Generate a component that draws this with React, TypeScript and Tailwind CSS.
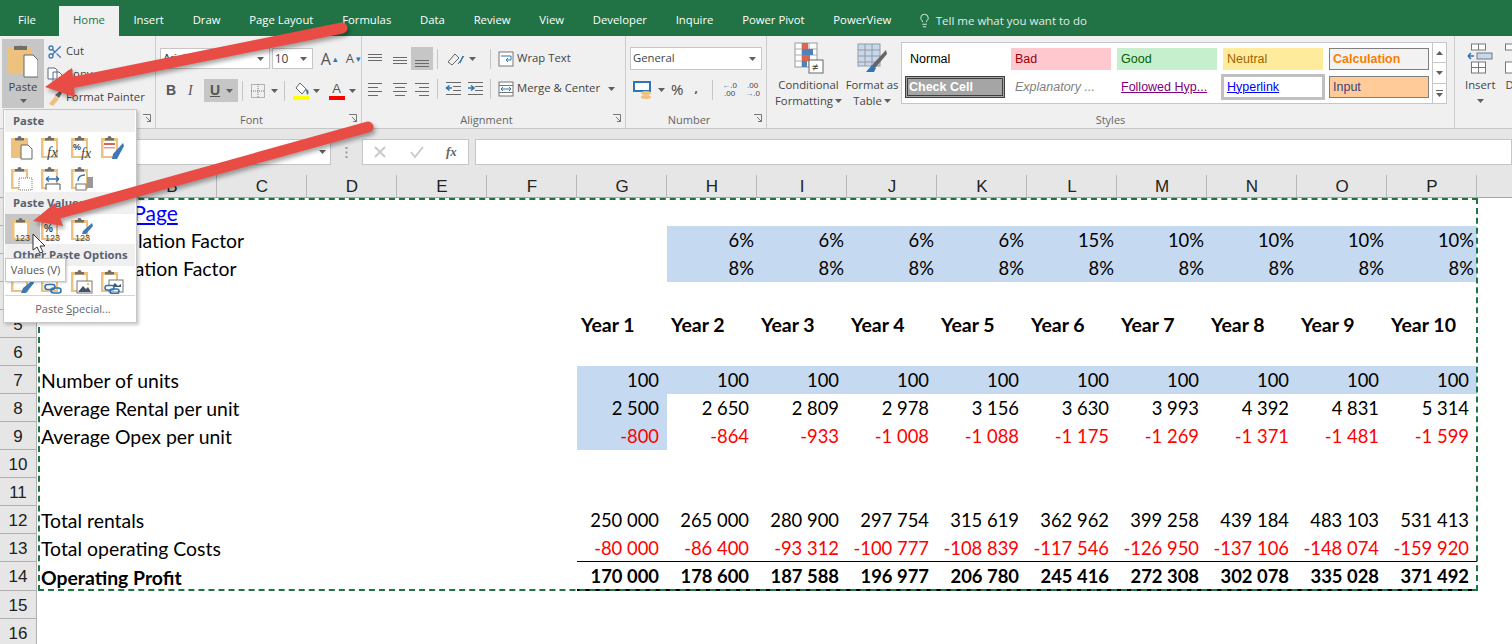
import { Lightbulb, Scissors } from "lucide-react";
import type { ReactNode } from "react";

const columns = ["A", "B", "C", "D", "E", "F", "G", "H", "I", "J", "K", "L", "M", "N", "O", "P"];
const tabs = ["Insert", "Draw", "Page Layout", "Formulas", "Data", "Review", "View", "Developer", "Inquire", "Power Pivot", "PowerView"];

type SheetRow = {
  n: number;
  label?: string;
  kind?: "link" | "bold";
  values?: string[];
  tone?: "red" | "bold" | "pct" | "year";
  blue?: number[];
  rule?: boolean;
  tall?: boolean;
};

const rows: SheetRow[] = [
  { n: 1, label: "Return to Page", kind: "link" },
  { n: 2, label: "Rental Escalation Factor", values: ["", "6%", "6%", "6%", "6%", "15%", "10%", "10%", "10%", "10%"], tone: "pct", blue: [1, 2, 3, 4, 5, 6, 7, 8, 9] },
  { n: 3, label: "Opex Escalation Factor", values: ["", "8%", "8%", "8%", "8%", "8%", "8%", "8%", "8%", "8%"], tone: "pct", blue: [1, 2, 3, 4, 5, 6, 7, 8, 9] },
  { n: 4 },
  { n: 5, values: ["Year 1", "Year 2", "Year 3", "Year 4", "Year 5", "Year 6", "Year 7", "Year 8", "Year 9", "Year 10"], tone: "year" },
  { n: 6 },
  { n: 7, label: "Number of units", values: Array(10).fill("100"), blue: [0, 1, 2, 3, 4, 5, 6, 7, 8, 9] },
  { n: 8, label: "Average Rental per unit", values: ["2 500", "2 650", "2 809", "2 978", "3 156", "3 630", "3 993", "4 392", "4 831", "5 314"], blue: [0] },
  { n: 9, label: "Average Opex per unit", values: ["-800", "-864", "-933", "-1 008", "-1 088", "-1 175", "-1 269", "-1 371", "-1 481", "-1 599"], tone: "red", blue: [0] },
  { n: 10 },
  { n: 11 },
  { n: 12, label: "Total rentals", values: ["250 000", "265 000", "280 900", "297 754", "315 619", "362 962", "399 258", "439 184", "483 103", "531 413"] },
  { n: 13, label: "Total operating Costs", values: ["-80 000", "-86 400", "-93 312", "-100 777", "-108 839", "-117 546", "-126 950", "-137 106", "-148 074", "-159 920"], tone: "red", rule: true },
  { n: 14, label: "Operating Profit", kind: "bold", values: ["170 000", "178 600", "187 588", "196 977", "206 780", "245 416", "272 308", "302 078", "335 028", "371 492"], tone: "bold", tall: true },
  { n: 15 },
  { n: 16 },
];

function Caret({ className = "" }: { className?: string }) {
  return (
    <svg width="7" height="4" viewBox="0 0 7 4" className={className}>
      <path d="M0 0h7L3.5 4z" fill="#5f5f5f" />
    </svg>
  );
}

function Lines({ widths, align = "left" }: { widths: number[]; align?: "left" | "center" | "right" }) {
  return (
    <svg width="16" height="16" viewBox="0 0 16 16">
      {widths.map((w, i) => {
        const x = align === "left" ? 1 : align === "center" ? 8 - w / 2 : 15 - w;
        return <rect key={i} x={x} y={2 + i * 4} width={w} height="1" fill="#6a6a6a" />;
      })}
    </svg>
  );
}

function VAlign({ top }: { top: number }) {
  return (
    <svg width="16" height="16" viewBox="0 0 16 16">
      {[0, 1, 2].map((i) => (
        <rect key={i} x="1" y={top + i * 3} width="14" height="1" fill="#6a6a6a" />
      ))}
    </svg>
  );
}

function Indent({ flip }: { flip?: boolean }) {
  return (
    <svg width="17" height="16" viewBox="0 0 17 16">
      {[1, 5, 9, 13].map((y) => (
        <rect key={y} x={y === 1 || y === 13 ? 1 : 8} y={y} width={y === 1 || y === 13 ? 15 : 8} height="1" fill="#6a6a6a" />
      ))}
      <path d={flip ? "M1 7h5M4 4.5 7 7l-3 2.5" : "M7 7H2M4.5 4.5 1.5 7l3 2.5"} stroke="#2e75b6" strokeWidth="1.6" fill="none" />
    </svg>
  );
}

function Clip({ children, hollow = true }: { children?: ReactNode; hollow?: boolean }) {
  return (
    <svg width="24" height="25" viewBox="0 0 24 25">
      <rect x="1" y="3" width="17" height="20" fill="#edc27f" />
      {hollow && <rect x="3.5" y="6" width="12.5" height="15" fill="#ffffff" />}
      <path d="M5 5V3h2.5a2 2 0 0 1 4 0H14v2.5H5z" fill="#6e6e6e" />
      {children}
    </svg>
  );
}

const iconText = "font-['Liberation_Serif',serif] italic";

function PasteGlyph({ kind }: { kind: string }) {
  switch (kind) {
    case "paste":
      return (
        <Clip hollow={false}>
          <path d="M11 10h7l4 4v10H11z" fill="#fff" stroke="#666" />
        </Clip>
      );
    case "fx":
      return (
        <Clip>
          <text x="7" y="22" fontSize="15" fill="#444" className={iconText}>fx</text>
        </Clip>
      );
    case "pctfx":
      return (
        <Clip>
          <text x="3" y="15" fontSize="9" fontWeight="700" fill="#444" className="font-['Liberation_Sans',sans-serif]">%</text>
          <text x="11" y="23" fontSize="14" fill="#444" className={iconText}>fx</text>
        </Clip>
      );
    case "format":
      return (
        <Clip>
          <rect x="4" y="8" width="11" height="2" fill="#d9645a" />
          <rect x="4" y="12" width="11" height="1.5" fill="#e79b92" />
          <path d="M23 8 13 19l-1 5h5L24 11z" fill="#3f78b4" />
        </Clip>
      );
    case "noborder":
      return (
        <Clip>
          <rect x="9" y="12" width="13" height="12" fill="#fff" stroke="#777" strokeDasharray="1 1" />
        </Clip>
      );
    case "width":
      return (
        <Clip>
          <path d="M6 13h13M6 13l3-2.500M6 13l3 2.500M19 13l-3-2.500M19 13l-3 2.500" stroke="#2e75b6" strokeWidth="1.3" fill="none" />
          <path d="M6 24v-6h14v6" stroke="#555" fill="#fff" />
        </Clip>
      );
    case "transpose":
      return (
        <Clip>
          <rect x="17" y="11" width="6" height="11" fill="#999" />
          <rect x="6" y="18" width="10" height="6" fill="#fff" stroke="#777" />
          <path d="M8 15c0-4 3-6 7-6" stroke="#2e75b6" strokeWidth="1.4" fill="none" />
        </Clip>
      );
    case "values":
      return (
        <Clip hollow>
          <text x="4" y="24" fontSize="9" fill="#444" className="font-['Liberation_Sans',sans-serif]">123</text>
        </Clip>
      );
    case "pct123":
      return (
        <Clip>
          <text x="4" y="15" fontSize="10" fontWeight="700" fill="#444" className="font-['Liberation_Sans',sans-serif]">%</text>
          <text x="5" y="24" fontSize="9" fill="#444" className="font-['Liberation_Sans',sans-serif]">123</text>
        </Clip>
      );
    case "fmt123":
      return (
        <Clip>
          <path d="M22 6 13 14l-1 3h4l7-8z" fill="#3f78b4" />
          <text x="5" y="24" fontSize="9" fill="#444" className="font-['Liberation_Sans',sans-serif]">123</text>
        </Clip>
      );
    case "fmtonly":
      return (
        <Clip>
          <path d="M23 11 13 19l-2 5h5l8-10z" fill="#3f78b4" />
        </Clip>
      );
    case "link":
      return (
        <Clip>
          <rect x="5" y="15.500" width="10" height="5" rx="2.500" stroke="#2e75b6" strokeWidth="1.6" fill="none" />
          <rect x="11" y="19" width="10" height="5" rx="2.500" stroke="#2e75b6" strokeWidth="1.6" fill="none" />
        </Clip>
      );
    case "picture":
      return (
        <Clip>
          <rect x="7" y="12" width="15" height="12" fill="#fff" stroke="#777" />
          <circle cx="18" cy="15" r="1.300" fill="#edc27f" />
          <path d="M8 23l5-6 3 3 2-2 3 5z" fill="#44546a" />
        </Clip>
      );
    default:
      return (
        <Clip>
          <rect x="9" y="11" width="14" height="12" fill="#fff" stroke="#777" />
          <path d="M11 18l4-4 3 3 3-2v3z" fill="#44546a" />
          <rect x="5" y="16.500" width="9" height="4.500" rx="2.200" stroke="#2e75b6" strokeWidth="1.600" fill="#fff" />
          <rect x="10" y="20" width="9" height="4.500" rx="2.200" stroke="#2e75b6" strokeWidth="1.600" fill="none" />
        </Clip>
      );
  }
}

function MenuHeader({ children }: { children: ReactNode }) {
  return (
    <div className="mx-[1px] flex h-[22px] items-center whitespace-nowrap bg-[#f0f0f0] pl-[8px] text-[11.300px] font-bold text-[#5a6170]">
      {children}
    </div>
  );
}

function PasteMenu() {
  return (
    <div className="absolute left-[3px] top-[109px] z-20 flex h-[214px] w-[134px] flex-col border border-[#c6c6c6] bg-white shadow-[2px_2px_3px_rgba(0,0,0,0.2)]">
      <MenuHeader>Paste</MenuHeader>
      <div className="flex gap-[6px] pl-[6px] pt-[3px]">
        {["paste", "fx", "pctfx", "format"].map((k) => (
          <PasteGlyph key={k} kind={k} />
        ))}
      </div>
      <div className="flex gap-[6px] pl-[6px] pt-[6px]">
        {["noborder", "width", "transpose"].map((k) => (
          <PasteGlyph key={k} kind={k} />
        ))}
      </div>
      <div className="mt-[1px]">
        <MenuHeader>Paste Values</MenuHeader>
      </div>
      <div className="flex h-[30px] items-center pl-[1px]">
        <div className="flex h-[30px] w-[35px] items-center justify-center bg-[#c6c6c6]">
          <PasteGlyph kind="values" />
        </div>
        <div className="flex gap-[6px]">
          <PasteGlyph kind="pct123" />
          <PasteGlyph kind="fmt123" />
        </div>
      </div>
      <MenuHeader>Other Paste Options</MenuHeader>
      <div className="flex gap-[6px] pl-[6px] pt-[3px]">
        {["fmtonly", "link", "picture", "linkpicture"].map((k) => (
          <PasteGlyph key={k} kind={k} />
        ))}
      </div>
      <div className="mx-[1px] mt-[1px] border-t border-[#d4d4d4]" />
      <div className="flex flex-1 items-center justify-center pl-[6px] text-[11px] text-[#666]">
        Paste&nbsp;<span className="underline">S</span>pecial...
      </div>
    </div>
  );
}

function Group({ width, label, launcher = true, children }: { width: number; label: string; launcher?: boolean; children: ReactNode }) {
  return (
    <div className="relative flex h-full shrink-0 flex-col border-r border-[#cdcdcd]" style={{ width }}>
      <div className="h-[77px]">{children}</div>
      <div className={`flex flex-1 items-start justify-center text-[11px] leading-[13px] text-[#666] ${launcher ? "pr-[14px]" : ""}`}>{label}</div>
      {launcher && (
        <svg width="8" height="8" viewBox="0 0 8 8" className="absolute bottom-[6px] right-[4px]">
          <path d="M0 .5h7.500V8M3 3l4 4M4 7.500h3.500V4" stroke="#777" fill="none" />
        </svg>
      )}
    </div>
  );
}

function Ribbon() {
  return (
    <div className="flex h-[93px] border-b border-[#c6c6c6] bg-[#f0f0f0] text-[11.300px] text-[#444]">
      <Group width={156} label="">
        <div className="flex h-full pl-[2px] pt-[3px]">
          <div className="flex h-[69px] w-[42px] flex-col items-center bg-[#c6c6c6] pt-[5px]">
            <svg width="30" height="34" viewBox="0 0 30 34">
              <rect x="0" y="3" width="24" height="27" fill="#edc27f" />
              <path d="M6 5V2h5a3 3 0 0 1 3 0h5v4H6z" fill="#6e6e6e" />
              <path d="M16 11h9l5 5v17H16z" fill="#fff" stroke="#666" />
            </svg>
            <span className="mt-[2px] leading-[14px]">Paste</span>
            <Caret className="mt-[5px]" />
          </div>
          <div className="flex flex-col gap-[6px] pl-[3px] pt-[4px]">
            <div className="flex h-[17px] items-center gap-[3px]">
              <Scissors size={16} className="text-[#3f78b4]" />
              Cut
            </div>
            <div className="flex h-[17px] items-center gap-[3px]">
              <svg width="16" height="16" viewBox="0 0 16 16">
                <path d="M1 1h7l2 2v9H1zM6 5h6l3 3v7H6z" fill="#fff" stroke="#5a6a80" />
              </svg>
              Copy
            </div>
            <div className="flex h-[17px] items-center gap-[3px] whitespace-nowrap">
              <svg width="16" height="16" viewBox="0 0 16 16">
                <path d="M2 14l6-8 4 3-6 7z" fill="#edc27f" />
                <path d="M8 5l5-4 2 2-3 5z" fill="#666" />
              </svg>
              Format Painter
            </div>
          </div>
        </div>
      </Group>

      <Group width={206} label="Font">
        <div className="flex flex-col gap-[10px] pl-[4px] pt-[12px]">
          <div className="flex h-[21px] items-center gap-[2px]">
            <div className="flex h-[21px] w-[110px] items-center justify-between border border-[#c6c6c6] bg-white pl-[2px] pr-[5px]">
              <span className="font-['Liberation_Sans',sans-serif]">Arial</span>
              <Caret />
            </div>
            <div className="flex h-[21px] w-[41px] items-center justify-between border border-[#c6c6c6] bg-white pl-[2px] pr-[5px] text-[12px]">
              10
              <Caret />
            </div>
            <span className="ml-[6px] text-[16px] leading-none text-[#555]">A</span>
            <span className="text-[9px] leading-none text-[#2e75b6]">▴</span>
            <span className="ml-[6px] text-[13px] leading-none text-[#555]">A</span>
            <span className="text-[9px] leading-none text-[#2e75b6]">▾</span>
          </div>
          <div className="flex h-[23px] items-center pl-[4px] font-['Liberation_Sans',sans-serif] text-[14px] text-[#555]">
            <span className="w-[24px] pl-[2px] font-bold">B</span>
            <span className="w-[16px] font-['Liberation_Serif',serif] italic">I</span>
            <div className="flex h-[23px] w-[34px] items-center gap-[6px] bg-[#c6c6c6] pl-[6px] font-bold">
              <span className="underline">U</span>
              <Caret />
            </div>
            <div className="ml-[4px] h-[20px] w-px bg-[#c6c6c6]" />
            <svg width="16" height="16" viewBox="0 0 16 16" className="ml-[7px]">
              <rect x="1.500" y="1.500" width="13" height="13" fill="none" stroke="#777" strokeDasharray="1 1" />
              <path d="M8 1v14M1 8h14" stroke="#777" strokeDasharray="1 1" />
            </svg>
            <Caret className="ml-[5px]" />
            <div className="ml-[6px] h-[20px] w-px bg-[#c6c6c6]" />
            <div className="ml-[7px] flex w-[18px] flex-col items-center">
              <svg width="16" height="13" viewBox="0 0 16 13">
                <path d="M7 1l6 6-4 5-6-6z" fill="#fff" stroke="#666" />
                <path d="M13 8c2 1 2 3 1 4" stroke="#2e75b6" strokeWidth="2" fill="none" />
              </svg>
              <div className="mt-[1px] h-[4px] w-[16px] bg-[#ffff00]" />
            </div>
            <Caret className="ml-[3px]" />
            <div className="ml-[8px] flex w-[17px] flex-col items-center text-[13px] leading-[13px]">
              A
              <div className="mt-[1px] h-[4px] w-[16px] bg-[#ff0000]" />
            </div>
            <Caret className="ml-[4px]" />
          </div>
        </div>
      </Group>

      <Group width={264} label="Alignment">
        <div className="flex flex-col gap-[7px] pl-[5px] pt-[11px]">
          <div className="flex h-[23px] items-center">
            <div className="flex w-[22px]"><VAlign top={3} /></div>
            <div className="flex w-[22px] justify-center"><VAlign top={6} /></div>
            <div className="flex h-[23px] w-[22px] items-center justify-center bg-[#c6c6c6]"><VAlign top={9} /></div>
            <div className="ml-[4px] h-[20px] w-px bg-[#c6c6c6]" />
            <svg width="20" height="18" viewBox="0 0 20 18" className="ml-[8px]">
              <path d="M2 12l7-8 4 4-7 7zM12 14l6-8" stroke="#666" fill="none" />
              <path d="M14 13l3-7" stroke="#2e75b6" strokeWidth="1.300" />
            </svg>
            <Caret className="ml-[3px]" />
            <div className="ml-[14px] h-[20px] w-px bg-[#c6c6c6]" />
            <svg width="16" height="16" viewBox="0 0 16 16" className="ml-[7px]">
              <rect x="1" y="1" width="14" height="14" fill="#fff" stroke="#777" />
              <path d="M3 5h10v4H8M8 9l2-2M8 9l2 2" stroke="#2e75b6" fill="none" />
            </svg>
            <span className="ml-[3px] whitespace-nowrap">Wrap Text</span>
          </div>
          <div className="flex h-[23px] items-center">
            <div className="flex w-[22px]"><Lines widths={[14, 10, 14, 10]} /></div>
            <div className="flex w-[22px] justify-center"><Lines widths={[14, 10, 14, 10]} align="center" /></div>
            <div className="flex w-[22px] justify-center"><Lines widths={[14, 10, 14, 10]} align="right" /></div>
            <div className="ml-[4px] h-[20px] w-px bg-[#c6c6c6]" />
            <div className="ml-[7px] flex gap-[5px]">
              <Indent />
              <Indent flip />
            </div>
            <div className="ml-[6px] h-[20px] w-px bg-[#c6c6c6]" />
            <svg width="16" height="16" viewBox="0 0 16 16" className="ml-[7px]">
              <rect x="1" y="1" width="14" height="14" fill="#fff" stroke="#777" />
              <path d="M1 4.500h14M1 11.500h14" stroke="#777" />
              <path d="M3 8h10M3 8l2-2M3 8l2 2M13 8l-2-2M13 8l-2 2" stroke="#2e75b6" fill="none" />
            </svg>
            <span className="ml-[3px] whitespace-nowrap">Merge &amp; Center</span>
            <Caret className="ml-[8px]" />
          </div>
        </div>
      </Group>

      <Group width={141} label="Number">
        <div className="flex flex-col gap-[8px] pl-[4px] pt-[11px]">
          <div className="flex h-[23px] w-[132px] items-center justify-between border border-[#c6c6c6] bg-white pl-[2px] pr-[5px]">
            General
            <Caret />
          </div>
          <div className="flex h-[23px] items-center">
            <svg width="22" height="20" viewBox="0 0 22 20" className="ml-[3px]">
              <rect x="1" y="2" width="16" height="9" fill="#fff" stroke="#2e75b6" strokeWidth="2" />
              <ellipse cx="13" cy="13" rx="5" ry="2" fill="#edc27f" />
              <ellipse cx="13" cy="17" rx="5" ry="2" fill="#edc27f" />
            </svg>
            <Caret className="ml-[3px]" />
            <span className="ml-[6px] text-[15px]">%</span>
            <span className="ml-[11px] font-bold">,</span>
            <div className="ml-[14px] h-[20px] w-px bg-[#c6c6c6]" />
            <div className="ml-[7px] w-[20px] text-center font-['Liberation_Sans',sans-serif] text-[8px] leading-[8px]">
              <div><span className="text-[#2e75b6]">←</span>.0</div>
              <div>.00</div>
            </div>
            <div className="ml-[3px] w-[20px] text-center font-['Liberation_Sans',sans-serif] text-[8px] leading-[8px]">
              <div>.00</div>
              <div><span className="text-[#2e75b6]">→</span>.0</div>
            </div>
          </div>
        </div>
      </Group>

      <Group width={688} label="Styles" launcher={false}>
        <div className="flex pl-[5px] pt-[6px]">
          <div className="flex w-[73px] flex-col items-center whitespace-nowrap text-center leading-[16px]">
            <svg width="30" height="32" viewBox="0 0 30 32">
              <rect x="1" y="1" width="22" height="24" fill="#fff" stroke="#999" />
              <path d="M1 7h22M1 13h22M1 19h22M8 1v24M15 1v24" stroke="#aaa" />
              <rect x="8" y="1" width="6" height="6" fill="#d9664d" />
              <rect x="8" y="7" width="11" height="6" fill="#4f81bd" />
              <rect x="8" y="13" width="8" height="6" fill="#d9664d" />
              <rect x="8" y="19" width="5" height="6" fill="#4f81bd" />
              <rect x="15" y="18" width="14" height="13" fill="#fff" stroke="#666" />
              <text x="18" y="29" fontSize="11" fill="#333" className="font-['Liberation_Sans',sans-serif]">≠</text>
            </svg>
            <span className="mt-[3px]">Conditional</span>
            <span className="flex items-center gap-[2px]">Formatting <Caret /></span>
          </div>
          <div className="flex w-[54px] flex-col items-center whitespace-nowrap text-center leading-[16px]">
            <svg width="30" height="32" viewBox="0 0 30 32">
              <rect x="1" y="2" width="22" height="22" fill="#c5d8ef" stroke="#999" />
              <path d="M1 8h22M1 14h22M1 20h22M8 2v22M15 2v22" stroke="#999" />
              <path d="M29 8 16 22l-2 4 5-1L30 12z" fill="#666" />
              <path d="M15 23 9 30h8l2-4z" fill="#2e75b6" />
            </svg>
            <span className="mt-[3px]">Format as</span>
            <span className="flex items-center gap-[2px]">Table <Caret /></span>
          </div>
          <div className="ml-[2px] flex h-[62px] w-[546px] border border-[#c6c6c6] bg-white font-['Liberation_Sans',sans-serif] text-[12.500px]">
            <div className="grid flex-1 grid-cols-[100px_100px_100px_100px_100px] grid-rows-[22px_22px] gap-x-[6px] gap-y-[6px] pl-[3px] pt-[5px]">
              <div className="flex items-center pl-[5px] text-black">Normal</div>
              <div className="flex items-center bg-[#ffc7ce] pl-[4px] text-[#9c0006]">Bad</div>
              <div className="flex items-center bg-[#c6efce] pl-[4px] text-[#006100]">Good</div>
              <div className="flex items-center bg-[#ffeb9c] pl-[4px] text-[#9c6500]">Neutral</div>
              <div className="flex items-center border border-[#7f7f7f] bg-[#f2f2f2] pl-[3px] font-bold text-[#fa7d00]">Calculation</div>
              <div className="flex items-center border-[3px] border-double border-[#3f3f3f] bg-[#a5a5a5] pl-[1px] font-bold text-white">Check Cell</div>
              <div className="flex items-center whitespace-nowrap pl-[4px] italic text-[#7f7f7f]">Explanatory ...</div>
              <div className="flex items-center whitespace-nowrap pl-[4px] text-[#800080] underline">Followed Hyp...</div>
              <div className="-m-[2px] flex items-center border-[3px] border-[#c0c0c0] pl-[3px] text-[#0000ff] underline">Hyperlink</div>
              <div className="flex items-center border border-[#7f7f7f] bg-[#ffcc99] pl-[3px] text-[#3f3f76]">Input</div>
            </div>
            <div className="flex w-[14px] flex-col border-l border-[#c6c6c6]">
              <div className="flex flex-1 items-center justify-center border-b border-[#c6c6c6]"><Caret className="rotate-180" /></div>
              <div className="flex flex-1 items-center justify-center border-b border-[#c6c6c6]"><Caret /></div>
              <div className="flex flex-1 flex-col items-center justify-center gap-[2px]">
                <div className="h-px w-[7px] bg-[#5f5f5f]" />
                <Caret />
              </div>
            </div>
          </div>
        </div>
      </Group>

      <div className="flex w-[57px] shrink-0 overflow-hidden pt-[7px]">
        <div className="ml-[10px] flex w-[32px] flex-col items-center">
          <svg width="26" height="31" viewBox="0 0 26 31">
            <rect x="4.500" y="1" width="14" height="6" fill="#fff" stroke="#777" />
            <path d="M11.500 1v6" stroke="#777" />
            <path d="M1 13h6M1 13l3-3M1 13l3 3" stroke="#2e75b6" strokeWidth="1.500" fill="none" />
            <rect x="10" y="10" width="15" height="6" fill="#c5d8ef" stroke="#777" />
            <rect x="4.500" y="19" width="14" height="11" fill="#fff" stroke="#777" />
            <path d="M11.500 19v11M4.500 24.500h14" stroke="#777" />
          </svg>
          <span className="mt-[3px] leading-[16px]">Insert</span>
          <Caret className="mt-[6px]" />
        </div>
        <div className="ml-[10px] flex flex-col">
          <svg width="26" height="31" viewBox="0 0 26 31">
            <rect x="0.500" y="1" width="14" height="6" fill="#fff" stroke="#777" />
            <rect x="0.500" y="19" width="14" height="11" fill="#fff" stroke="#777" />
          </svg>
          <span className="mt-[3px] leading-[16px]">Delete</span>
        </div>
      </div>
    </div>
  );
}

function FormulaBar() {
  return (
    <div className="flex h-[46px] items-start bg-[#e6e6e6] pl-[3px] pt-[10px]">
      <div className="flex h-[26px] w-[328px] items-center justify-end border border-[#c6c6c6] bg-white pr-[4px]">
        <Caret />
      </div>
      <div className="flex h-[26px] w-[31px] items-center justify-center text-[#999]">
        <svg width="3" height="11" viewBox="0 0 3 11"><path d="M1.500 0v2M1.500 4.500v2M1.500 9v2" stroke="#999" strokeWidth="2" /></svg>
      </div>
      <div className="flex h-[26px] w-[107px] items-center border border-[#c6c6c6] bg-white pl-[10px] text-[#c8c8c8]">
        <svg width="14" height="14" viewBox="0 0 14 14"><path d="M2 2l10 10M12 2 2 12" stroke="#c8c8c8" strokeWidth="1.800" /></svg>
        <svg width="14" height="14" viewBox="0 0 14 14" className="ml-[23px]"><path d="M1 7l4 5 8-10" stroke="#c8c8c8" strokeWidth="1.800" fill="none" /></svg>
        <span className="ml-[22px] font-['Liberation_Serif',serif] text-[13px] font-bold italic text-[#666]">fx</span>
      </div>
      <div className="ml-[6px] h-[26px] flex-1 border border-[#c6c6c6] bg-white" />
    </div>
  );
}

function Sheet() {
  return (
    <div className="relative bg-white font-['Lato',sans-serif] text-[18.400px] text-black">
      <div className="flex h-[23px] border-b border-[#a6a6a6] bg-[#e6e6e6] font-['Liberation_Sans',sans-serif] text-[17px] text-[#222]">
        <div className="w-[37px] shrink-0 border-r border-[#b0b0b0]" />
        {columns.map((c) => (
          <div key={c} className="flex w-[90px] shrink-0 items-center justify-center border-r border-[#b8b8b8] pl-[1px] pt-[2px]">
            {c}
          </div>
        ))}
      </div>
      {rows.map((r) => (
        <div key={r.n} className={`flex ${r.tall ? "h-[29px]" : "h-[28px]"}`}>
          <div className="flex w-[37px] shrink-0 items-center justify-center border-b border-r border-[#b0b0b0] bg-[#e6e6e6] pt-[2px] font-['Liberation_Sans',sans-serif] text-[17px] text-[#222]">
            {r.n}
          </div>
          <div
            className={`flex w-[540px] shrink-0 items-center whitespace-nowrap pl-[4px] pt-[2px] ${
              r.kind === "link" ? "text-[21px] text-[#0000ff] underline" : "text-[19.400px]"
            } ${r.kind === "bold" ? "font-bold" : ""}`}
          >
            {r.label}
          </div>
          {r.values?.map((v, i) => {
            const blue = r.blue?.includes(i);
            return (
              <div
                key={i}
                className={`flex w-[90px] shrink-0 items-center whitespace-nowrap ${blue ? "bg-[#c5d9f1]" : ""} ${
                  r.tone === "year" ? "justify-start pl-[4px] pt-[1px] text-[19.500px] font-bold" : "justify-end pt-[2px]"
                } ${r.tone === "pct" ? "pr-[3px]" : r.tone === "year" ? "" : "pr-[8px]"} ${
                  r.tone === "red" ? "text-[#ff0000]" : ""
                } ${r.tone === "bold" ? "border-b-2 border-black font-bold" : ""} ${
                  r.rule ? "border-b border-black" : ""
                }`}
              >
                {v}
              </div>
            );
          })}
        </div>
      ))}
      {/* copy marquee around the used range */}
      <div className="pointer-events-none absolute left-[38px] top-[23px] h-[393px] w-[1440px] border-2 border-dashed border-[#217346]" />
    </div>
  );
}

function Arrows() {
  return (
    <svg width="1512" height="644" viewBox="0 0 1512 644" className="pointer-events-none absolute left-0 top-0 z-30 drop-shadow-[2px_3px_2px_rgba(0,0,0,0.35)]">
      <path d="M342 28 70 83" stroke="#e84c45" strokeWidth="11" strokeLinecap="round" />
      <polygon points="45,87 72,68 75,97" fill="#e84c45" />
      <path d="M368 127 56 214" stroke="#e84c45" strokeWidth="11" strokeLinecap="round" />
      <polygon points="33,221 55,203 63,226" fill="#e84c45" />
    </svg>
  );
}

export default function App() {
  return (
    <div className="relative h-[644px] w-[1512px] overflow-hidden bg-white font-['Open_Sans',sans-serif]">
      <div className="flex h-[36px] items-end bg-[#217346] text-[11.300px] text-white">
        <div className="flex h-[30px] w-[59px] items-center pb-[1px] pl-[18px]">File</div>
        <div className="flex h-[30px] w-[60px] items-center justify-center bg-[#f0f0f0] pb-[1px] text-[#217346]">Home</div>
        <div className="flex">
          {tabs.map((t) => (
            <div key={t} className="flex h-[30px] items-center whitespace-nowrap px-[14.400px] pb-[1px]">
              {t}
            </div>
          ))}
        </div>
        <div className="flex h-[30px] items-center gap-[4px] pb-[1px] pl-[11px] text-[11.500px] text-[#e3ece7]">
          <Lightbulb size={15} strokeWidth={1.5} />
          Tell me what you want to do
        </div>
      </div>
      <Ribbon />
      <FormulaBar />
      <Sheet />
      <PasteMenu />
      <div className="absolute left-[5px] top-[258px] z-20 flex h-[24px] w-[61px] items-center justify-center border border-[#c6c6c6] bg-white text-[11px] text-[#555] shadow-[1px_1px_2px_rgba(0,0,0,0.2)]">
        Values (V)
      </div>
      <Arrows />
      <svg width="16" height="22" viewBox="0 0 16 22" className="absolute left-[32px] top-[233px] z-40">
        <path d="M1 1v16l4-3 3 6 3-1-3-6h5z" fill="#fff" stroke="#333" />
      </svg>
    </div>
  );
}
